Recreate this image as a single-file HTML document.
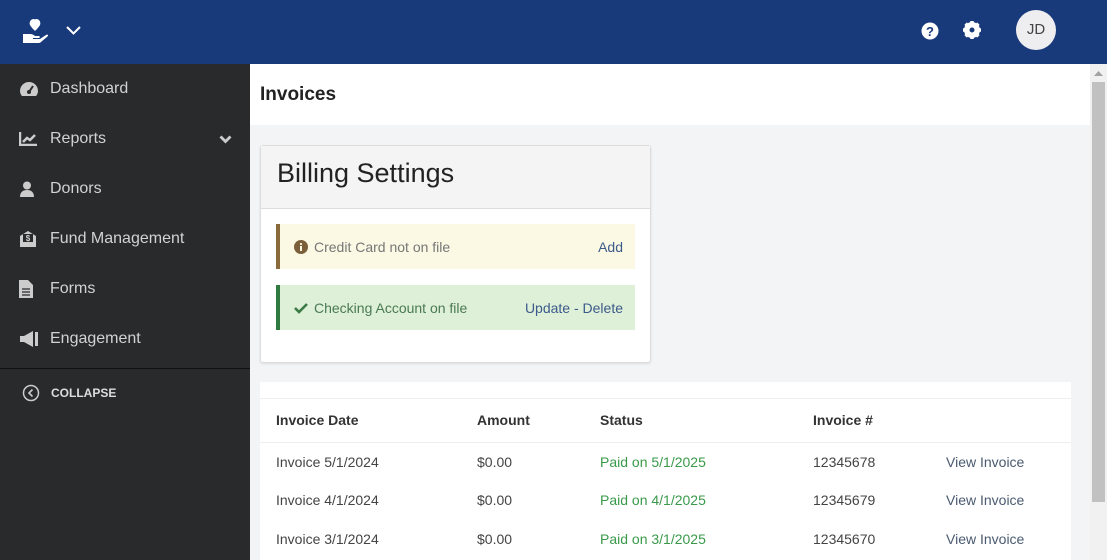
<!DOCTYPE html>
<html><head><style>
*{margin:0;padding:0;box-sizing:border-box}
html,body{width:1107px;height:560px;overflow:hidden}
body{font-family:"Liberation Sans",sans-serif;background:#f3f4f6;position:relative}
.top{position:absolute;left:0;top:0;width:1107px;height:64px;background:#183a7b}
.side{position:absolute;left:0;top:64px;width:250px;height:496px;background:#282a2c}
.item{position:absolute;left:0;height:50px;width:250px;color:#d2d2d2;font-size:16px;display:flex;align-items:center}
.item svg{position:absolute;left:19px}
.item span{position:absolute;left:50px}
.main{position:absolute;left:250px;top:64px;width:840px;height:496px;overflow:hidden}
.title{height:61px;background:#fff;font-size:19px;font-weight:bold;color:#222;padding:20px 10px}
.card{position:absolute;left:10px;top:81px;width:391px;height:218px;background:#fff;border:1px solid #ddd;border-radius:3px;box-shadow:0 1px 2px rgba(0,0,0,.1)}
.ch{height:63px;background:#f4f4f4;border-bottom:1px solid #ddd;font-size:27px;color:#222;padding:12px 16px}
.al{position:absolute;left:15px;width:359px;height:45px;font-size:14px;display:flex;align-items:center;padding-left:34px}
.al .r{position:absolute;right:12px;color:#3c5a8a}
.tbl{position:absolute;left:10px;top:318px;width:811px;height:178px;background:#fff}
.row{position:absolute;left:0;width:811px;font-size:14px;color:#444}
.row div{position:absolute}
.sb{position:absolute;left:1090px;top:64px;width:17px;height:496px;background:#f1f1f1}
</style></head><body>
<div class="top">
<svg style="position:absolute;left:22px;top:18px" width="26" height="28" viewBox="0 0 26 28"><path d="M12 1c-4 0-5 4-4 6 1 2 4 5 5 6 1-1 4-4 5-6 1-2 0-6-4-6-1 0-1 1-1 1s0-1-1-1z" fill="#fff"/><path d="M1 16h7c2 0 4 1 5 2h4c1 0 1 2 0 2h-6v1h7l6-4c1-1 3 0 2 1l-7 6c-1 1-2 1-3 1H1z" fill="#fff"/></svg>
<svg style="position:absolute;left:66px;top:26px" width="15" height="10" viewBox="0 0 15 10"><path d="M1 1l6.5 6.5L14 1" stroke="#fff" stroke-width="2" fill="none"/></svg>
<svg style="position:absolute;left:921px;top:22px" width="18" height="18" viewBox="0 0 18 18"><circle cx="9" cy="9" r="8.5" fill="#fff"/><text x="9" y="14" font-size="13" font-weight="bold" text-anchor="middle" fill="#183a7b" font-family="Liberation Sans">?</text></svg>
<svg style="position:absolute;left:963px;top:21px" width="18" height="18" viewBox="0 0 18 18"><circle cx="9" cy="9" r="6" fill="none" stroke="#fff" stroke-width="4"/><g stroke="#fff" stroke-width="3.5"><path d="M9 0v18M0 9h18M2.6 2.6l12.8 12.8M15.4 2.6L2.6 15.4"/></g><circle cx="9" cy="9" r="2.5" fill="#183a7b"/></svg>
<div style="position:absolute;left:1016px;top:10px;width:40px;height:40px;border-radius:50%;background:#eeeef0;color:#444;font-size:15px;text-align:center;line-height:40px">JD</div>
</div>
<div class="side">
<div class="item" style="top:0"><svg width="20" height="16" viewBox="0 0 20 16"><path d="M10 1a9 9 0 0 0-9 9c0 2 1 4 2 5h14c1-1 2-3 2-5a9 9 0 0 0-9-9z" fill="#ccc"/><path d="M10 11l4-6" stroke="#282a2c" stroke-width="2"/><circle cx="10" cy="11" r="2" fill="#282a2c"/></svg><span>Dashboard</span></div>
<div class="item" style="top:50px"><svg width="18" height="14" viewBox="0 0 18 14"><path d="M1 0v13h17" stroke="#ccc" stroke-width="2.5" fill="none"/><path d="M4 10l4-4 3 2 5-5" stroke="#ccc" stroke-width="2.5" fill="none"/></svg><span>Reports</span><svg style="left:219px" width="13" height="9" viewBox="0 0 13 9"><path d="M1.5 1.5l5 5 5-5" stroke="#ccc" stroke-width="2.8" fill="none"/></svg></div>
<div class="item" style="top:100px"><svg width="16" height="16" viewBox="0 0 16 16"><circle cx="8" cy="4.5" r="4" fill="#ccc"/><path d="M1 16c0-5 3-7 7-7s7 2 7 7z" fill="#ccc"/></svg><span>Donors</span></div>
<div class="item" style="top:150px"><svg width="18" height="18" viewBox="0 0 18 18"><path d="M1 6l8-5 8 5v11H1z" fill="#ccc"/><rect x="4" y="4" width="10" height="8" fill="#282a2c"/><text x="9" y="11" font-size="8" font-weight="bold" text-anchor="middle" fill="#ccc" font-family="Liberation Sans">$</text></svg><span>Fund Management</span></div>
<div class="item" style="top:200px"><svg width="14" height="18" viewBox="0 0 14 18"><path d="M0 0h9l5 5v13H0z" fill="#ccc"/><path d="M3 9h8M3 12h8M3 15h8" stroke="#282a2c" stroke-width="1.2"/></svg><span>Forms</span></div>
<div class="item" style="top:250px"><svg width="20" height="16" viewBox="0 0 20 16"><path d="M1 5h4l9-5v16l-9-5H1z" fill="#ccc"/><rect x="16" y="1" width="3" height="14" fill="#ccc"/></svg><span>Engagement</span></div>
<div style="position:absolute;left:0;top:304px;width:250px;height:1px;background:#111"></div>
<div class="item" style="top:304px;font-size:12px;font-weight:bold;color:#ddd"><svg style="left:22px" width="18" height="18" viewBox="0 0 18 18"><circle cx="9" cy="9" r="7.5" stroke="#ccc" stroke-width="1.5" fill="none"/><path d="M10.5 5.5L7 9l3.5 3.5" stroke="#ccc" stroke-width="1.6" fill="none"/></svg><span style="left:51px">COLLAPSE</span></div>
</div>
<div class="main">
<div class="title">Invoices</div>
<div class="card">
<div class="ch">Billing Settings</div>
<div class="al" style="top:78px;background:#fbf8e4;border-left:4px solid #8a6a3a;color:#777"><svg style="position:absolute;left:14px" width="14" height="14" viewBox="0 0 14 14"><circle cx="7" cy="7" r="7" fill="#7a5f3a"/><rect x="6" y="6" width="2" height="5" fill="#fbf8e4"/><circle cx="7" cy="4" r="1.1" fill="#fbf8e4"/></svg>Credit Card not on file<span class="r">Add</span></div>
<div class="al" style="top:139px;background:#dff0d8;border-left:4px solid #2f7a3f;color:#4a7a55"><svg style="position:absolute;left:14px" width="14" height="12" viewBox="0 0 14 12"><path d="M1 6l4 4 8-8" stroke="#3a7a45" stroke-width="2.6" fill="none"/></svg>Checking Account on file<span class="r">Update - Delete</span></div>
</div>
<div class="tbl">
<div style="position:absolute;top:16px;left:0;width:811px;height:1px;background:#eee"></div>
<div class="row" style="top:30px;font-weight:bold;color:#333"><div style="left:16px">Invoice Date</div><div style="left:217px">Amount</div><div style="left:340px">Status</div><div style="left:553px">Invoice #</div></div>
<div style="position:absolute;top:60px;left:0;width:811px;height:1px;background:#eee"></div>
<div class="row" style="top:72px"><div style="left:16px">Invoice 5/1/2024</div><div style="left:217px">$0.00</div><div style="left:340px;color:#3a9a4a">Paid on 5/1/2025</div><div style="left:553px">12345678</div><div style="left:686px;color:#4a5a70">View Invoice</div></div>
<div class="row" style="top:110px"><div style="left:16px">Invoice 4/1/2024</div><div style="left:217px">$0.00</div><div style="left:340px;color:#3a9a4a">Paid on 4/1/2025</div><div style="left:553px">12345679</div><div style="left:686px;color:#4a5a70">View Invoice</div></div>
<div class="row" style="top:149px"><div style="left:16px">Invoice 3/1/2024</div><div style="left:217px">$0.00</div><div style="left:340px;color:#3a9a4a">Paid on 3/1/2025</div><div style="left:553px">12345670</div><div style="left:686px;color:#4a5a70">View Invoice</div></div>
</div>
</div>
<div class="sb"><svg style="position:absolute;left:4px;top:7px" width="9" height="6"><path d="M0 5l4.5-5L9 5z" fill="#a3a3a3"/></svg><div style="position:absolute;left:2px;top:18px;width:13px;height:420px;background:#c1c1c1"></div></div>
</body></html>
